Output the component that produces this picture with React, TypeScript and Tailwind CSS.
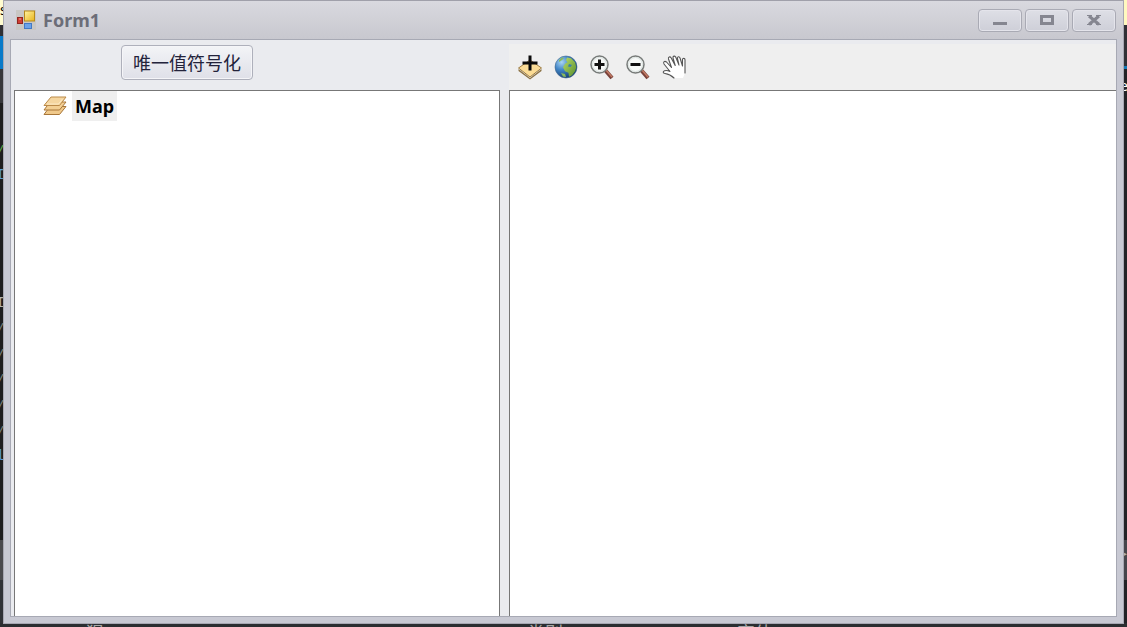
import type { ReactNode } from "react";

const editorMarks = [
  { text: "/", place: "top-[142px] text-[#57a64a]" },
  { text: "I", place: "top-[165px] text-[#5a9bd5]" },
  { text: "I", place: "top-[293px] text-[#b4b4b4]" },
  { text: "/", place: "top-[320px] text-[#77807a]" },
  { text: "/", place: "top-[346px] text-[#77807a]" },
  { text: "/", place: "top-[371px] text-[#77807a]" },
  { text: "/", place: "top-[397px] text-[#77807a]" },
  { text: "/", place: "top-[423px] text-[#77807a]" },
  { text: "l", place: "top-[446px] text-[#5a9bd5]" },
];

function FormIcon() {
  return (
    <svg width="20" height="20" viewBox="0 0 20 20" aria-hidden="true">
      <defs>
        <linearGradient id="yellowTile" x1="0" y1="0" x2="1" y2="1">
          <stop offset="0" stopColor="#fff3a0" />
          <stop offset="1" stopColor="#e8b41c" />
        </linearGradient>
      </defs>
      <rect width="20" height="20" fill="#c9c7c4" />
      <rect x="8.5" y="1" width="10" height="10" fill="url(#yellowTile)" stroke="#b78a1b" />
      <rect x="1.5" y="7.5" width="5" height="6" fill="#cf3e33" stroke="#93251f" />
      <path d="M3 9h2" stroke="#f3a79c" />
      <rect x="8.5" y="13.5" width="7" height="5" fill="#6ba2ea" stroke="#4279c5" />
    </svg>
  );
}

function LayersIcon() {
  return (
    <svg width="24" height="20" viewBox="0 0 24 20" strokeLinejoin="round" aria-hidden="true">
      <path d="M1 18.500l3-4 3-4h16l-6.500 8z" fill="#f0c98b" stroke="#a87638" />
      <path d="M1 14l3-4 3-4h16l-6.500 8z" fill="#f3cf93" stroke="#a87638" />
      <path d="M1 9.500l7-8.500h15l-6.500 8.500z" fill="#f5d6a0" stroke="#bb8a49" />
      <path d="M4 8h11.500l4-5" fill="none" stroke="#fce9c4" />
    </svg>
  );
}

function AddDataIcon() {
  return (
    <svg width="26" height="26" viewBox="0 0 26 26" aria-hidden="true">
      <path d="M1.500 15L13 24l11.500-9v2L13 25.500 1.500 17z" fill="#8d7447" />
      <path d="M1.500 14L13 6l11.500 8L13 23z" fill="#fbdc96" stroke="#9b7b43" strokeLinejoin="round" />
      <path d="M13 1.500v15M5.500 9h15" stroke="#0b0b0b" strokeWidth="3" />
    </svg>
  );
}

function GlobeIcon() {
  return (
    <svg width="26" height="26" viewBox="0 0 26 26" aria-hidden="true">
      <defs>
        <radialGradient id="ocean" cx=".3" cy=".28" r=".78">
          <stop offset="0" stopColor="#a9d5f4" />
          <stop offset=".45" stopColor="#4286c6" />
          <stop offset="1" stopColor="#153d72" />
        </radialGradient>
        <linearGradient id="land" x1="0" y1="0" x2="1" y2="1">
          <stop offset="0" stopColor="#b9dc6a" />
          <stop offset="1" stopColor="#5a8f2c" />
        </linearGradient>
      </defs>
      <circle cx="13" cy="13" r="11" fill="url(#ocean)" stroke="#41688d" strokeWidth=".6" />
      <path d="M14 3.500l4 .7 4 4 1.300 5-1.300 4-3 4-3 1.500-.5-4-3.500-1.500-2-4 2-3.500 2.500-1.500-1.500-2z" fill="url(#land)" />
      <path d="M16 10l3 1-1.500 2-2.500-.5z" fill="#3b7fa8" />
      <path d="M6 6l3-2.500 2 .5-2 2-3 2zM8 19l4 1 1 3-3-.5z" fill="#8abb5a" />
    </svg>
  );
}

function MagnifierIcon({ plus = false }: { plus?: boolean }) {
  return (
    <svg width="26" height="26" viewBox="0 0 26 26" aria-hidden="true">
      <path d="M16.500 16.500L23 24" stroke="#79413a" strokeWidth="4" />
      <path d="M17 16l6 7" stroke="#c27a63" strokeWidth="1.500" />
      <circle cx="10.500" cy="10.500" r="8.500" fill="#f8faf9" stroke="#777b79" strokeWidth="1.500" />
      <circle cx="10.500" cy="10.500" r="7" fill="none" stroke="#d8e0dd" />
      <path d={plus ? "M5.500 10.500h10M10.500 5.500v10" : "M5.500 10.500h10"} stroke="#111" strokeWidth="3" />
    </svg>
  );
}

function HandIcon() {
  return (
    <svg width="26" height="26" viewBox="0 0 26 26" aria-hidden="true">
      <path
        d="M13 24c-2-2-5-4-9-4.500-2-.2-2.500-2-.5-2.700 2-.6 3.500-.3 5.500.7L3 10C2 8 3.500 6.500 5.500 8l5 5.500L7.500 5c-.5-2 1.500-3 2.700-1l4 7.500L12 4c-.3-2 2-2.700 2.800-.7L18 11l-1.500-6.500c-.2-2 1.800-2.300 2.500-.5L21.500 12V5.500c0-1.500 2.500-1.500 2.500.2V19l-2 5z"
        fill="#fff"
      />
      <path
        d="M13 24c-2-2-5-4-9-4.500-2-.2-2.500-2-.5-2.700 2-.6 3.500-.3 5.500.7L3 10C2 8 3.500 6.500 5.500 8l5 5.500L7.500 5c-.5-2 1.500-3 2.700-1l4 7.500L12 4c-.3-2 2-2.700 2.800-.7L18 11l-1.500-6.500c-.2-2 1.800-2.300 2.500-.5L21.500 12V5.500c0-1.500 2.500-1.500 2.500.2V19"
        fill="none"
        stroke="#555"
        strokeWidth="1.100"
        strokeLinecap="round"
        strokeLinejoin="round"
      />
    </svg>
  );
}

function CaptionButton({ label, children }: { label: string; children: ReactNode }) {
  return (
    <button
      type="button"
      aria-label={label}
      className="flex h-[23px] w-[44px] items-center justify-center rounded-[4px] border border-[#a9aab4] bg-linear-to-b from-[#dedfe6] to-[#cecfd8] shadow-[inset_0_0_0_1px_#e4e4eb]"
    >
      {children}
    </button>
  );
}

function ToolButton({ label, children }: { label: string; children: ReactNode }) {
  return (
    <button type="button" aria-label={label} title={label} className="flex size-[26px] items-center justify-center">
      {children}
    </button>
  );
}

function TitleBar() {
  return (
    <header className="flex h-[39px] shrink-0 items-center justify-between border-t border-[#a0a0aa] bg-linear-to-b from-[#d9d9df] to-[#c8c8cf] pr-[7px] pl-3">
      <div className="flex items-center gap-[7px]">
        <FormIcon />
        <h1 className="text-lg leading-6 font-bold text-[#6c6d78]">Form1</h1>
      </div>
      <div className="flex gap-[3px]">
        <CaptionButton label="Minimize">
          <svg width="14" height="12" viewBox="0 0 14 12" aria-hidden="true">
            <path d="M0 9.500h14" stroke="#858690" strokeWidth="3" />
          </svg>
        </CaptionButton>
        <CaptionButton label="Maximize">
          <svg width="14" height="12" viewBox="0 0 14 12" aria-hidden="true">
            <rect x="1.500" y="2.500" width="11" height="7" fill="none" stroke="#858690" strokeWidth="3" />
          </svg>
        </CaptionButton>
        <CaptionButton label="Close">
          <svg width="14" height="12" viewBox="0 0 14 12" aria-hidden="true">
            <path d="M2 2l10 8.500M12 2L2 10.500" stroke="#858690" strokeWidth="3" />
            <path d="M0 1.500h5M9 1.500h5M0 10.500h5M9 10.500h5" stroke="#858690" />
          </svg>
        </CaptionButton>
      </div>
    </header>
  );
}

export default function App() {
  return (
    <div className="relative h-screen overflow-hidden bg-[#252628] px-[3px] pb-[3px] font-['Noto_Sans','Noto_Sans_CJK_SC',sans-serif]">
      {/* editor left open behind the form */}
      <div aria-hidden="true" className="absolute inset-y-0 left-0 w-[3px] overflow-hidden bg-[#1e1e1f] text-sm leading-5">
        <div className="h-[25px] bg-[#fffcd0]">
          <span className="block text-black">s</span>
        </div>
        <div className="h-[11px] bg-[#303034]" />
        <div className="h-[33px] bg-[#0879c9]" />
        <div className="h-[34px] bg-[#37373b]" />
        {editorMarks.map((mark) => (
          <span key={mark.place} className={`absolute -left-1 font-['Liberation_Mono',monospace] ${mark.place}`}>
            {mark.text}
          </span>
        ))}
        <div className="absolute inset-x-0 bottom-0 h-[87px] border-t-[40px] border-[#4a4a4e] bg-[#303236]" />
      </div>
      <div aria-hidden="true" className="absolute inset-y-0 right-0 w-[3px] overflow-hidden bg-[#222326] text-sm leading-5">
        <div className="h-[25px] bg-[#fff9bf]" />
        <div className="h-[41px] bg-[#303136]" />
        <div className="h-[3px] bg-[#147ab8]" />
        <span className="absolute top-[76px] -left-1 text-white">e</span>
        <div className="absolute inset-x-0 bottom-[47px] h-10 bg-[#46464c]" />
        <span className="absolute bottom-16 -left-1 text-sm text-[#b0b0b0]">▸</span>
      </div>
      <div
        aria-hidden="true"
        className="absolute inset-x-0 bottom-0 flex h-1 overflow-hidden bg-[#2b2e31] pl-[86px] text-lg leading-5 text-[#a5a5a5]"
      >
        <span className="w-[441px]">猖</span>
        <span className="w-[210px]">类别</span>
        <span>字体</span>
      </div>

      <main className="relative flex h-full flex-col border-x border-b border-[#a7a7b2] bg-[#c8c9d3]">
        <TitleBar />
        <div className="mx-[6px] mb-[6px] grid min-h-0 flex-1 grid-cols-[486fr_608fr] gap-[9px] border border-[#a7a9b4] bg-[#eaebef] pl-[3px]">
          <section className="flex min-h-0 flex-col">
            <div className="flex h-[50px] shrink-0 items-start pt-[5px] pl-[107px]">
              <button
                type="button"
                className="h-[35px] rounded-[4px] border border-[#aeb0bb] bg-linear-to-b from-[#f3f4f7] to-[#dfe0e8] px-[11px] text-lg leading-6 whitespace-nowrap text-[#23233b] shadow-[inset_0_0_0_1px_#f5f5f8]"
              >
                唯一值符号化
              </button>
            </div>
            <div className="flex min-h-0 flex-1 items-start border-x border-t border-[#777] bg-white pl-[28px]">
              <div className="flex items-center gap-[5px]">
                <LayersIcon />
                <span className="h-[30px] bg-[#efefef] px-[3px] text-lg leading-[30px] font-bold text-black">Map</span>
              </div>
            </div>
          </section>
          <section className="flex min-h-0 flex-col">
            <div className="h-[50px] shrink-0 pt-1">
              <div
                role="toolbar"
                aria-label="Map tools"
                className="flex h-full items-center gap-[10px] bg-[#efefef] pl-2"
              >
                <ToolButton label="Add Data">
                  <AddDataIcon />
                </ToolButton>
                <ToolButton label="Full Extent">
                  <GlobeIcon />
                </ToolButton>
                <ToolButton label="Zoom In">
                  <MagnifierIcon plus />
                </ToolButton>
                <ToolButton label="Zoom Out">
                  <MagnifierIcon />
                </ToolButton>
                <ToolButton label="Pan">
                  <HandIcon />
                </ToolButton>
              </div>
            </div>
            <div className="flex-1 border-t border-l border-[#777] bg-white" />
          </section>
        </div>
      </main>
    </div>
  );
}
